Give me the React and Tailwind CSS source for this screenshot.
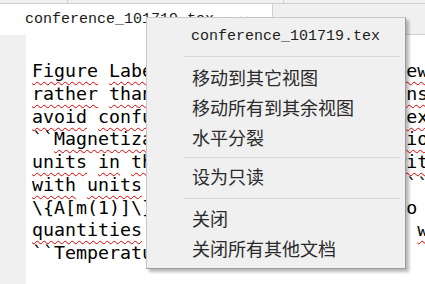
import React from 'react';

const LINES = [
  '~Figure~ ~Labels~: ~Use~ 8 ~point~ ~Times~ ~New~ ~Roman~ ~for~ ~Figure~ ~labels~. ~Use~ ~words~',
  '~rather~ ~than~ ~symbols~ ~or~ ~abbreviations~ ~when~ ~writing~ ~Figure~ ~axis~ ~labels~ ~to~',
  '~avoid~ ~confusing~ ~the~ ~reader~. ~As~ ~an~ ~example~, ~write~ ~the~ ~quantity~',
  "``~Magnetization~'', ~or~ ``~Magnetization~, M'', ~not~ ~just~ ``M''. ~If~ ~including~",
  '~units~ ~in~ ~the~ ~label~, ~present~ ~them~ ~within~ ~parentheses~. Do ~not~ ~label~ ~axes~',
  '~with~ ~units~. ~In~ ~the~ ~example~, ~write~ ``~Magnetization~',
  "\\{A[m(1)]\\}'', ~not~ ~just~ ``A/m''. Do ~not~ ~label~ ~axes~ ~with~ ~a~ ~ratio~ ~of~",
  "~quantities~ ~and~ ~units~. ~For~ ~example~, ~write~ ``Temperature (K)'', ~not~",
  "``Temperature/K''.",
];

function Line({ text }) {
  // segments between ~ marks get the spell-check squiggle
  const parts = text.split('~');
  return (
    <div className="h-[22.75px] leading-[22.75px] whitespace-pre">
      {parts.map((p, i) =>
        i % 2 === 1 ? (
          <span
            key={i}
            className="underline decoration-wavy decoration-[#e00000] decoration-1 underline-offset-[4px]"
          >
            {p}
          </span>
        ) : (
          <span key={i}>{p}</span>
        )
      )}
    </div>
  );
}

const Separator = ({ top, bottom }) => (
  <div className={`${top} ${bottom} ml-[37px] mr-[5px] h-px bg-[#d7d7d7]`} />
);

function MenuItem({ label }) {
  return (
    <div className="h-[30px] flex items-center pl-[45px] text-[18px] text-[#2a2a2a] font-['Noto_Sans_CJK_SC',sans-serif]">
      {label}
    </div>
  );
}

function ContextMenu() {
  return (
    <div className="absolute left-[146px] top-[17px] w-[260px] h-[252px] bg-[#f0f0f0] border border-[#c8c8c8] border-r-[#9a9a9a] border-b-[#9a9a9a] shadow-[3px_3px_3px_rgba(0,0,0,0.28)] pt-[4px]">
      <div className="h-[30px] flex items-center pl-[44px] text-[15px] text-[#1e1e1e] font-['Liberation_Mono',monospace]">
        conference_101719.tex
      </div>
      <Separator top="mt-[4px]" bottom="mb-[5px]" />
      <MenuItem label="移动到其它视图" />
      <MenuItem label="移动所有到其余视图" />
      <MenuItem label="水平分裂" />
      <Separator top="mt-[5px]" bottom="mb-[3px]" />
      <MenuItem label="设为只读" />
      <Separator top="mt-[7px]" bottom="mb-[4px]" />
      <MenuItem label="关闭" />
      <MenuItem label="关闭所有其他文档" />
    </div>
  );
}

export default function App() {
  return (
    <div className="relative w-[425px] h-[284px] overflow-hidden bg-[#f0f0f0] flex flex-col">
      {/* remnant of the bar above */}
      <div className="h-[4px] flex border-b border-[#cfcfcf]">
        <div className="w-[68px] border-r border-[#cfcfcf]" />
        <div className="w-[216px] border-r border-[#cfcfcf]" />
        <div className="flex-1" />
      </div>

      {/* tab bar */}
      <div className="h-[31px] flex">
        <div className="w-[273px] bg-white border-r border-[#d0d0d0] flex items-center pl-[25px] pt-[2px] text-[15px] text-[#1a1a1a] font-['Liberation_Mono',monospace]">
          <span>conference_101719.tex</span>
          <span className="ml-[23px] text-[16px] text-[#333] font-['DejaVu_Sans',sans-serif]">×</span>
        </div>
        <div className="flex-1 border-b border-[#cfcfcf]" />
      </div>

      {/* editor */}
      <div className="flex-1 flex">
        <div className="w-[26px] bg-[#f0f0f0]" />
        <div className="flex-1 bg-white overflow-hidden pt-[25px] pl-[6px] text-[18.3px] text-black font-['DejaVu_Sans_Mono',monospace]">
          {LINES.map((l, i) => (
            <Line key={i} text={l} />
          ))}
        </div>
      </div>

      <ContextMenu />
    </div>
  );
}
